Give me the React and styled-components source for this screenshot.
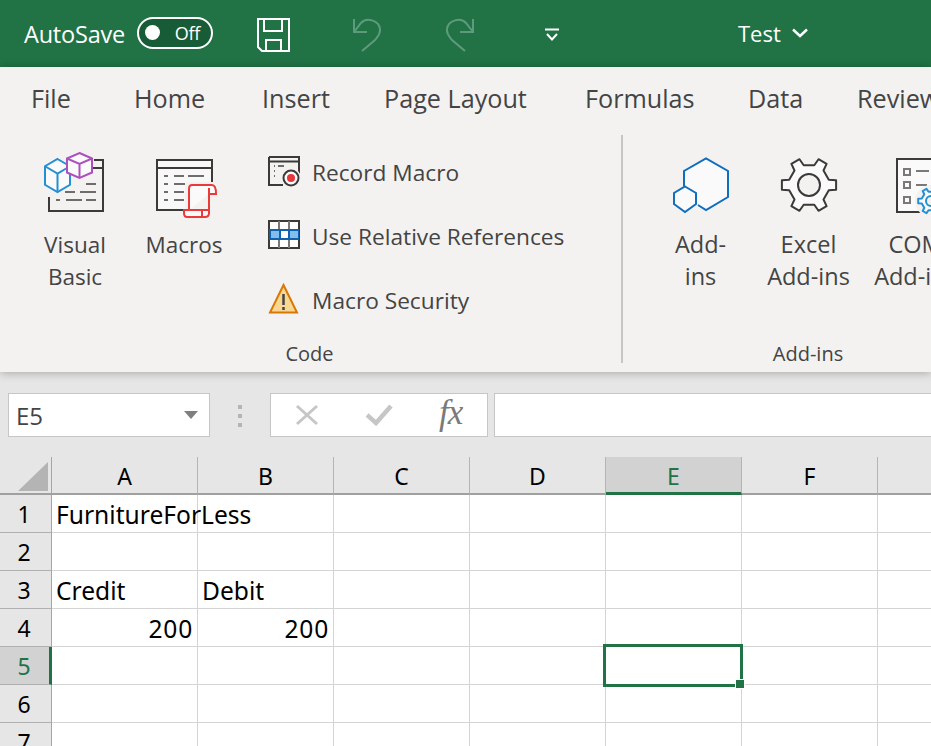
import React from "react";
import styled, { createGlobalStyle } from "styled-components";

const Global = createGlobalStyle`
  html, body { margin: 0; padding: 0; background: #fff; }
  * { box-sizing: border-box; }
`;
const UI = `"Open Sans", "Noto Sans", sans-serif`;
const CELL = `"Noto Sans", "Open Sans", sans-serif`;

const App_ = styled.div`
  width: 931px; height: 746px; overflow: hidden; font-family: ${UI}; background: #fff; display: flex; flex-direction: column;
`;
const TitleBar = styled.header`
  height: 67px; flex: none; background: #217346; color: #fff; display: flex; align-items: center; padding-left: 24px;
`;
const AutoSaveLabel = styled.span`font-size: 23.5px; width: 113px; letter-spacing: -0.2px; white-space: nowrap;`;
const Toggle = styled.div`
  width: 76px; height: 32px; border: 2px solid #fff; border-radius: 16px; background: #185c37; display: flex; align-items: center; justify-content: space-between; padding: 0 11px 0 6px; font-size: 18px; letter-spacing: -0.3px; margin-top: -2px;
`;
const Knob = styled.span`width: 15px; height: 15px; border-radius: 50%; background: #fff;`;
const TitleIcon = styled.svg`flex: none; display: block; margin-left: ${p => p.$gap}px; margin-top: 2px;`;
const DocTitle = styled.div`
  margin-left: 178px; display: flex; align-items: center; gap: 11px; font-size: 22px; margin-top: -1px;
`;

const Ribbon = styled.section`
  height: 305px; flex: none; background: #f3f2f1; box-shadow: 0 1px 9px rgba(0,0,0,.28); position: relative; z-index: 2; display: flex; flex-direction: column; overflow: hidden;
`;
const Tabs = styled.nav`height: 61px; margin-bottom: 4px; display: flex; align-items: center; padding-top: 1px; font-size: 25.2px; color: #444; flex: none;`;
const Tab = styled.span`flex: none; margin-left: ${p => p.$left || 0}px; width: ${p => p.$w}px; white-space: nowrap;`;
const Groups = styled.div`flex: 1; display: flex; padding-top: 3px; padding-bottom: 9px; min-height: 0;`;
const Group = styled.div`
  width: ${p => p.$w}px; flex: none; display: flex; flex-direction: column; ${p => p.$sep ? "border-right: 2px solid #c8c6c4;" : ""}
`;
const GroupBody = styled.div`flex: 1; display: flex; padding-left: ${p => p.$pl}px;`;
const GroupLabel = styled.div`
  font-size: 20px; color: #444; text-align: center; height: 26px; line-height: 26px; margin-bottom: -4px; padding-right: ${p => p.$pr || 0}px;
`;
const LargeButton = styled.div`
  width: ${p => p.$w}px; flex: none; display: flex; flex-direction: column; align-items: center; font-size: ${p => p.$size}px; line-height: 32px; color: #444; text-align: center; padding-top: ${p => p.$pt}px;
`;
const LargeLabel = styled.div`margin-top: ${p => p.$mt}px; white-space: pre-line;`;
const IconSvg = styled.svg`display: block; flex: none; overflow: visible; margin-left: ${p => p.$ml || 0}px;`;
const SmallColumn = styled.div`display: flex; flex-direction: column; margin-left: 30px; padding-top: 5px;`;
const SmallButton = styled.div`height: 64px; display: flex; align-items: center; gap: 13px; font-size: 22.7px; color: #444; white-space: nowrap;`;
const SmallIconSlot = styled.div`width: 31px; flex: none; display: flex; justify-content: center; margin-top: -3px;`;

const FormulaArea = styled.section`
  height: 85px; flex: none; background: #e6e6e6; display: flex; padding: 21px 0 0 8px;
`;
const NameBox = styled.div`
  width: 202px; height: 44px; background: #fff; border: 1px solid #c6c6c6; display: flex; align-items: center; justify-content: space-between; padding: 0 11px 0 7px; font-size: 24px; color: #444;
`;
const Caret = styled.span`width: 0; height: 0; border-left: 7.5px solid transparent; border-right: 7.5px solid transparent; border-top: 8px solid #7f7f7f;`;
const Grip = styled.div`width: 60px; flex: none; display: flex; flex-direction: column; gap: 5px; align-items: center; padding-top: 12px;`;
const GripDot = styled.span`width: 4px; height: 4px; background: #b4b4b4;`;
const FxBox = styled.div`
  width: 218px; height: 44px; background: #fff; border: 1px solid #c6c6c6; display: flex; align-items: center; padding-left: 24px; flex: none;
`;
const FxText = styled.span`font-family: "Liberation Serif", serif; font-style: italic; font-size: 35px; color: #7a7a7a; margin-left: 46px; margin-top: -4px; letter-spacing: -1px;`;
const FormulaInput = styled.div`flex: 1; margin-left: 6px; height: 44px; background: #fff; border: 1px solid #c6c6c6; border-right: 0;`;
const CheckSvg = styled.svg`flex: none; margin-left: 47px;`;

const Sheet = styled.div`
  display: grid; grid-template-columns: 52px 146px repeat(6, 136px); grid-auto-rows: 38px; background: #fff; flex: none;
  font-family: ${CELL}; color: #000;
`;
const Corner = styled.div`background: #e6e6e6; border-right: 1px solid #a6a6a6; border-bottom: 2px solid #a0a0a0; position: relative;`;
const CornerTriangle = styled.span`
  position: absolute; right: 3px; bottom: 2px; width: 0; height: 0; border-left: 30px solid transparent; border-bottom: 29px solid #b4b4b4;
`;
const ColHead = styled.div`
  background: ${p => p.$active ? "#d2d2d2" : "#e6e6e6"}; color: ${p => p.$active ? "#217346" : "#000"};
  border-right: 1px solid #b4b4b4; border-bottom: ${p => p.$active ? "3px solid #217346" : "2px solid #a0a0a0"};
  display: flex; align-items: center; justify-content: center; font-size: 23px; padding-top: ${p => p.$active ? 3 : 2}px;
`;
const RowHead = styled.div`
  background: ${p => p.$active ? "#d2d2d2" : "#e6e6e6"}; color: ${p => p.$active ? "#217346" : "#000"};
  border-right: ${p => p.$active ? "3px solid #217346" : "1px solid #a6a6a6"}; border-bottom: 1px solid #b0b0b0;
  display: flex; align-items: center; justify-content: center; font-size: 23px; padding-right: ${p => p.$active ? 1 : 3}px;
`;
const Cell = styled.div`
  border-right: 1px solid #d4d4d4; border-bottom: 1px solid #d4d4d4;
  font-size: 24.6px; display: flex; align-items: center; padding: 2px 4px 0; white-space: nowrap; position: relative;
  justify-content: ${p => p.$right ? "flex-end" : "flex-start"};
  letter-spacing: ${p => p.$right ? "0.8px" : "0"};
`;
const Selection = styled.div`
  position: absolute; left: -3px; top: -3px; width: 140px; height: 43px; border: 3px solid #217346; z-index: 3; pointer-events: none;
`;
const FillHandle = styled.span`
  position: absolute; right: -5px; bottom: -5px; width: 10px; height: 10px; background: #217346; border: 1px solid #fff;
`;

const Save = () => (
  <TitleIcon $gap={44} width="33" height="34" viewBox="0 0 33 34" fill="none" stroke="#fff" strokeWidth="2">
    <path d="M1 1H32V33H5L1 29Z" />
    <path d="M7 1V13H25V1" />
    <path d="M9 33V22H24V33" />
  </TitleIcon>
);
const Undo = () => (
  <TitleIcon $gap={62} width="30" height="34" viewBox="0 0 30 34" fill="none" stroke="#5f9a7d" strokeWidth="2">
    <path d="M2 1V14H15" />
    <path d="M2 14L9 5C14 -1 27 2 28 11C28.600 16 26 18 23 22L10 33" />
  </TitleIcon>
);
const Redo = () => (
  <TitleIcon $gap={63} width="30" height="34" viewBox="0 0 30 34" fill="none" stroke="#5f9a7d" strokeWidth="2">
    <path d="M28 1V14H15" />
    <path d="M28 14L21 5C16 -1 3 2 2 11C1.400 16 4 18 7 22L20 33" />
  </TitleIcon>
);
const Customize = () => (
  <TitleIcon $gap={69} width="16" height="14" viewBox="0 0 16 14" fill="none" stroke="#fff" strokeWidth="2">
    <path d="M1 1.500H15" />
    <path d="M3 6L8 11.500L13 6" />
  </TitleIcon>
);

const Cube = ({ x, y, w, h, color }) => {
  const cx = x + w / 2, q = h * 0.22;
  return (
    <g fill="#fafafa" stroke={color} strokeWidth="2">
      <path d={`M${cx} ${y}L${x + w} ${y + q}V${y + h - q}L${cx} ${y + h}L${x} ${y + h - q}V${y + q}Z`} />
      <path d={`M${x} ${y + q}L${cx} ${y + 2 * q}L${x + w} ${y + q}M${cx} ${y + 2 * q}V${y + h}`} fill="none" />
    </g>
  );
};

const VisualBasicIcon = () => (
  <IconSvg width="62" height="68" viewBox="0 0 62 68" fill="none">
    <path d="M50 8H59V59H5V45" stroke="#3b3a39" strokeWidth="2" />
    <path d="M46 16H59" stroke="#3b3a39" strokeWidth="2" />
    <path d="M42 32H52M21 40H31M36 40H52M12 48H16M22 48H38M42 48H52" stroke="#6e6d6b" strokeWidth="2" />
    <Cube x={1} y={7} w={25} h={33} color="#2390d4" />
    <Cube x={23} y={1} w={25} h={25} color="#ad50bf" />
  </IconSvg>
);

const MacrosIcon = () => (
  <IconSvg width="64" height="62" viewBox="0 0 64 62" fill="none">
    <path d="M5 3H60V53H5Z" fill="#f8f8f8" stroke="#3b3a39" strokeWidth="2" />
    <path d="M5 11H60" stroke="#3b3a39" strokeWidth="2" />
    <path d="M12 19H16M22 19H32M36 19H52M12 27H16M22 27H36M12 35H16M22 35H32M12 43H16M22 43H32" stroke="#6e6d6b" strokeWidth="2" />
    <rect x="33" y="25" width="32" height="36" fill="#f3f2f1" />
    <g fill="#fafafa" stroke="#ea3a3a" strokeWidth="2">
      <path d="M37 53V32C37 29 38 28 40 28H60C63 28 64 31 64 37H57" />
      <path d="M37 53H57V31V56C57 59 55 60 53 60H44" />
      <path d="M32 53H50V60H35C33 60 32 58 32 56Z" />
    </g>
  </IconSvg>
);

const RecordIcon = () => (
  <IconSvg width="32" height="30" viewBox="0 0 32 30" fill="none">
    <path d="M1 1H31V22M15 29H1V1M1 5.500H31" stroke="#3b3a39" strokeWidth="2" />
    <path d="M6 10H7M10 10H16M6 15H7M6 20H7" stroke="#6e6d6b" strokeWidth="2" />
    <circle cx="23" cy="22" r="10" fill="#f3f2f1" />
    <circle cx="23" cy="22" r="7.500" fill="#fafafa" stroke="#3b3a39" strokeWidth="2" />
    <circle cx="23" cy="22" r="4" fill="#e8363a" />
  </IconSvg>
);

const RelativeIcon = () => (
  <IconSvg width="32" height="30" viewBox="0 0 32 30" fill="none">
    <rect x="1" y="1" width="30" height="27" fill="#fff" stroke="#3b3a39" strokeWidth="2" />
    <path d="M11 1V28M21 1V28" stroke="#7a7977" strokeWidth="2" />
    <rect x="1" y="9" width="30" height="11" fill="#0f62b0" />
    <rect x="3" y="11" width="8" height="7" fill="#83bdec" />
    <rect x="13" y="11" width="7" height="7" fill="#fff" />
    <rect x="22" y="11" width="8" height="7" fill="#83bdec" />
  </IconSvg>
);

const WarnIcon = () => (
  <IconSvg width="31" height="31" viewBox="0 0 31 31" fill="none">
    <path d="M15.500 2L29 29.500H2Z" fill="#f8d792" stroke="#d97706" strokeWidth="2" />
    <path d="M15.500 11V22M15.500 24V27" stroke="#444" strokeWidth="2.500" />
  </IconSvg>
);

const AddInIcon = () => (
  <IconSvg width="58" height="58" viewBox="0 0 58 58" fill="none">
    <path d="M12 29V14L34 1.500L56 14V40L34 53L26 48" fill="#fafafa" stroke="#106ebe" strokeWidth="2" />
    <path d="M13 29.500L24 36V47L13 55L2 47V36Z" fill="#fafafa" stroke="#106ebe" strokeWidth="2" />
  </IconSvg>
);

const gearPath = (cx, cy, inner, outer) => {
  const pts = [];
  for (let i = 0; i < 6; i++) {
    const a = (i * 60) * Math.PI / 180;
    const d = [[-0.26, inner], [-0.17, outer], [0.17, outer], [0.26, inner]];
    d.forEach(([o, r]) => pts.push(`${(cx + r * Math.cos(a + o)).toFixed(1)} ${(cy + r * Math.sin(a + o)).toFixed(1)}`));
  }
  return "M" + pts.join("L") + "Z";
};

const GearIcon = () => (
  <IconSvg width="58" height="58" viewBox="0 0 58 58" fill="none">
    <path d={gearPath(29, 28, 20.500, 27.500)} fill="#fafafa" stroke="#3b3a39" strokeWidth="2" strokeLinejoin="round" />
    <circle cx="29" cy="28" r="11" fill="#f3f2f1" stroke="#3b3a39" strokeWidth="2" />
  </IconSvg>
);

const ComIcon = () => (
  <IconSvg $ml={22} width="64" height="58" viewBox="0 0 64 58" fill="none">
    <path d="M2 2H62V55H2Z" fill="#fafafa" stroke="#3b3a39" strokeWidth="2" />
    <g stroke="#7a7977" strokeWidth="2">
      <rect x="9" y="12" width="6" height="6" />
      <rect x="9" y="25" width="6" height="6" />
      <rect x="9" y="40" width="6" height="6" />
      <path d="M21 14H34M21 28H32" />
    </g>
    <circle cx="36" cy="44" r="16" fill="#f3f2f1" />
    <path d={gearPath(36, 44, 9.500, 13)} fill="#fafafa" stroke="#2390d4" strokeWidth="2" strokeLinejoin="round" />
    <circle cx="36" cy="44" r="5" stroke="#2390d4" strokeWidth="2" fill="#f3f2f1" />
  </IconSvg>
);

const CancelIcon = () => (
  <svg width="24" height="22" viewBox="0 0 24 22" fill="none" stroke="#c6c6c6" strokeWidth="3">
    <path d="M2 2L22 20M22 2L2 20" />
  </svg>
);
const CheckIcon = () => (
  <CheckSvg width="27" height="22" viewBox="0 0 27 22" fill="none" stroke="#c6c6c6" strokeWidth="4.500">
    <path d="M1 11L10 19L25 2" />
  </CheckSvg>
);

const cols = ["A", "B", "C", "D", "E", "F", "G"];
const data = {
  1: { A: { t: "FurnitureForLess" } },
  3: { A: { t: "Credit" }, B: { t: "Debit" } },
  4: { A: { t: "200", r: 1 }, B: { t: "200", r: 1 } },
};

export default function App() {
  return (
    <App_>
      <Global />
      <TitleBar>
        <AutoSaveLabel>AutoSave</AutoSaveLabel>
        <Toggle><Knob />Off</Toggle>
        <Save /><Undo /><Redo /><Customize />
        <DocTitle>
          Test
          <svg width="16" height="10" viewBox="0 0 16 10" fill="none" stroke="#fff" strokeWidth="2.500"><path d="M1 1.500L8 8L15 1.500" /></svg>
        </DocTitle>
      </TitleBar>
      <Ribbon>
        <Tabs>
          <Tab $left={31} $w={103}>File</Tab>
          <Tab $w={128}>Home</Tab>
          <Tab $w={122}>Insert</Tab>
          <Tab $w={201}>Page Layout</Tab>
          <Tab $w={163}>Formulas</Tab>
          <Tab $w={109}>Data</Tab>
          <Tab $w={100}>Review</Tab>
        </Tabs>
        <Groups>
          <Group $w={623} $sep>
            <GroupBody $pl={20}>
              <LargeButton $w={110} $pt={17} $size={22.5}>
                <VisualBasicIcon />
                <LargeLabel $mt={9}>{"Visual\nBasic"}</LargeLabel>
              </LargeButton>
              <LargeButton $w={108} $pt={22} $size={22.5}>
                <MacrosIcon />
                <LargeLabel $mt={10}>Macros</LargeLabel>
              </LargeButton>
              <SmallColumn>
                <SmallButton><SmallIconSlot><RecordIcon /></SmallIconSlot>Record Macro</SmallButton>
                <SmallButton><SmallIconSlot><RelativeIcon /></SmallIconSlot>Use Relative References</SmallButton>
                <SmallButton><SmallIconSlot><WarnIcon /></SmallIconSlot>Macro Security</SmallButton>
              </SmallColumn>
            </GroupBody>
            <GroupLabel $pr={2}>Code</GroupLabel>
          </Group>
          <Group $w={370}>
            <GroupBody $pl={23}>
              <LargeButton $w={109} $pt={22} $size={23.5}>
                <AddInIcon />
                <LargeLabel $mt={13}>{"Add-\nins"}</LargeLabel>
              </LargeButton>
              <LargeButton $w={107} $pt={22} $size={23.5}>
                <GearIcon />
                <LargeLabel $mt={13}>{"Excel\nAdd-ins"}</LargeLabel>
              </LargeButton>
              <LargeButton $w={107} $pt={22} $size={23.5}>
                <ComIcon />
                <LargeLabel $mt={13}>{"COM\nAdd-ins"}</LargeLabel>
              </LargeButton>
            </GroupBody>
            <GroupLabel>Add-ins</GroupLabel>
          </Group>
        </Groups>
      </Ribbon>
      <FormulaArea>
        <NameBox>E5<Caret /></NameBox>
        <Grip><GripDot /><GripDot /><GripDot /></Grip>
        <FxBox>
          <CancelIcon /><CheckIcon /><FxText>fx</FxText>
        </FxBox>
        <FormulaInput />
      </FormulaArea>
      <Sheet>
        <Corner><CornerTriangle /></Corner>
        {cols.map(c => <ColHead key={c} $active={c === "E"}>{c === "G" ? "" : c}</ColHead>)}
        {[1, 2, 3, 4, 5, 6, 7].map(r => (
          <React.Fragment key={r}>
            <RowHead $active={r === 5}>{r}</RowHead>
            {cols.map(c => {
              const d = data[r] && data[r][c];
              return (
                <Cell key={c} $right={d && d.r}>
                  {d ? d.t : ""}
                  {r === 5 && c === "E" ? <Selection><FillHandle /></Selection> : null}
                </Cell>
              );
            })}
          </React.Fragment>
        ))}
      </Sheet>
    </App_>
  );
}
